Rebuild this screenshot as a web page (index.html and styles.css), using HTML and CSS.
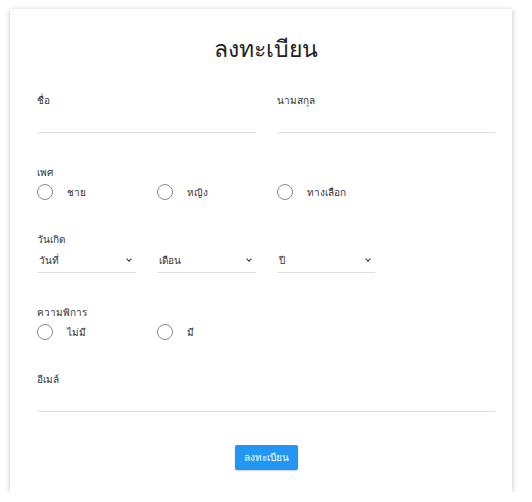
FILE: index.html
```html
<!DOCTYPE html>
<html lang="th">
<head>
  <meta charset="UTF-8">
  <meta name="viewport" content="width=device-width, initial-scale=1.0">
  <title>ลงทะเบียน</title>
  <link rel="stylesheet" href="styles.css">
</head>
<body>
  <main class="card">
    <h1 class="title">ลงทะเบียน</h1>

    <div class="cols first">
      <div class="field half">
        <label class="label">ชื่อ</label>
        <input class="line" type="text">
      </div>
      <div class="field half">
        <label class="label">นามสกุล</label>
        <input class="line" type="text">
      </div>
    </div>

    <div class="group">
      <div class="label">เพศ</div>
      <div class="cols radios">
        <label class="radio"><span class="dot"></span>ชาย</label>
        <label class="radio"><span class="dot"></span>หญิง</label>
        <label class="radio"><span class="dot"></span>ทางเลือก</label>
      </div>
    </div>

    <div class="group">
      <div class="label">วันเกิด</div>
      <div class="cols">
        <div class="select">วันที่<span class="chev"></span></div>
        <div class="select">เดือน<span class="chev"></span></div>
        <div class="select">ปี<span class="chev"></span></div>
      </div>
    </div>

    <div class="group">
      <div class="label">ความพิการ</div>
      <div class="cols radios">
        <label class="radio"><span class="dot"></span>ไม่มี</label>
        <label class="radio"><span class="dot"></span>มี</label>
      </div>
    </div>

    <div class="group">
      <label class="label">อีเมล์</label>
      <input class="line" type="text">
    </div>

    <div class="actions">
      <button class="btn">ลงทะเบียน</button>
    </div>
  </main>
</body>
</html>
```

FILE: styles.css
```css
* {
  margin: 0;
  padding: 0;
  box-sizing: border-box;
}
body {
  background-color: #fff;
  font-family: "Noto Sans", "DejaVu Sans", sans-serif;
  color: #333;
  padding: 9px 20px 0 10px;
}
.card {
  height: 483px;
  background-color: #fff;
  box-shadow: 0 1px 5px rgba(0, 0, 0, 0.25);
  padding: 19px 17px 0 27px;
}
.title {
  font-size: 23px;
  font-weight: normal;
  text-align: center;
  line-height: 40px;
  height: 40px;
  color: #222;
}
.cols {
  display: grid;
  grid-template-columns: repeat(4, 1fr);
  column-gap: 21px;
}
.first {
  margin-top: 24px;
}
.half {
  grid-column: span 2;
}
.group {
  margin-top: 31px;
}
.label {
  display: block;
  font-size: 10px;
  line-height: 16px;
  height: 16px;
}
.line {
  display: block;
  width: 100%;
  height: 25px;
  border: none;
  border-bottom: 1px solid #e0e0e0;
  outline: none;
  font-family: inherit;
}
.radios {
  margin-top: 4px;
}
.radio {
  display: flex;
  align-items: center;
  font-size: 10px;
  height: 16px;
}
.dot {
  width: 16px;
  height: 16px;
  border: 1px solid #8a8a8a;
  border-radius: 50%;
  margin-right: 14px;
}
.select {
  display: flex;
  align-items: center;
  justify-content: space-between;
  height: 26px;
  padding: 1px 5px 0 2px;
  font-size: 10px;
  border-bottom: 1px solid #e0e0e0;
}
.chev {
  width: 4px;
  height: 4px;
  border-right: 1.5px solid #333;
  border-bottom: 1.5px solid #333;
  transform: rotate(45deg);
  margin-top: -2px;
}
.actions {
  margin-top: 32px;
  text-align: center;
}
.btn {
  width: 63px;
  height: 25px;
  background-color: #2196f3;
  color: #fff;
  border: none;
  border-radius: 2px;
  font-family: inherit;
  font-size: 10px;
  box-shadow: 0 1px 2px rgba(0, 0, 0, 0.2);
}
```
